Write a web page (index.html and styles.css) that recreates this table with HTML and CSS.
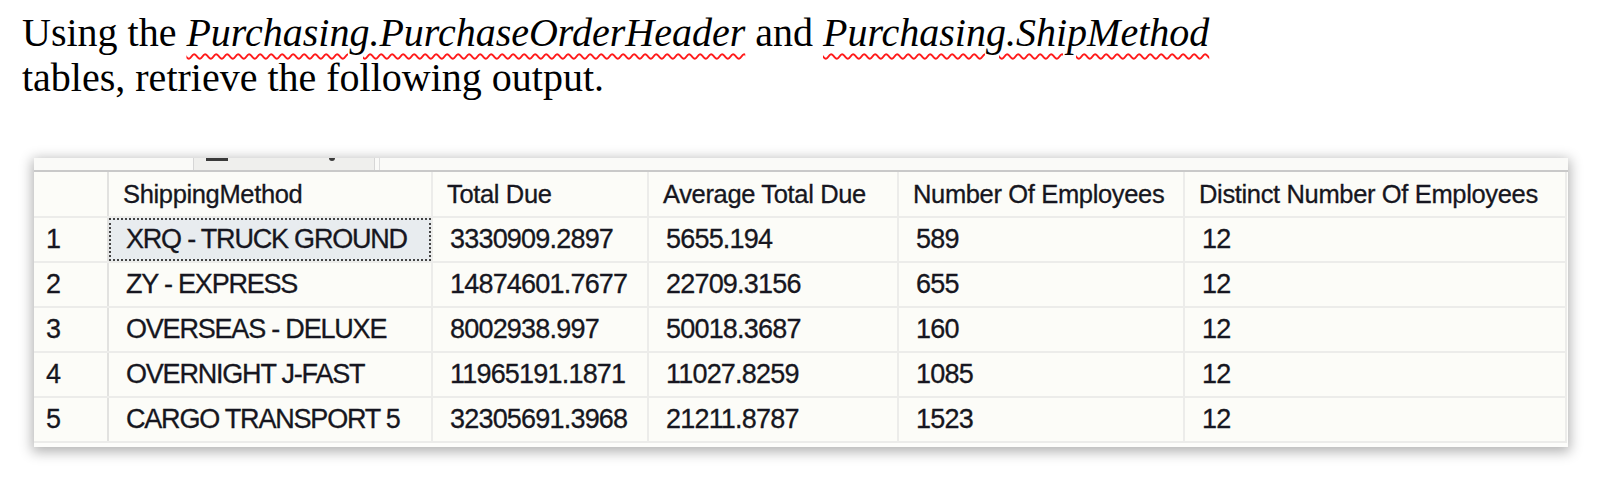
FILE: index.html
```html
<!DOCTYPE html>
<html>
<head>
<meta charset="utf-8">
<link rel="stylesheet" href="styles.css">
</head>
<body>
<p class="intro">Using the <em class="sq">Purchasing.PurchaseOrderHeader</em> and <em class="sq">Purchasing.ShipMethod</em><br>tables, retrieve the following output.</p>
<div class="panel">
  <div class="tabstrip">
    <div class="tab"><span class="mark m1"></span><span class="mark m2"></span></div>
    <div class="tab2"></div>
  </div>
  <table class="grid">
    <colgroup>
      <col class="c0"><col class="c1"><col class="c2"><col class="c3"><col class="c4"><col class="c5">
    </colgroup>
    <thead>
      <tr><th class="rn"></th><th>ShippingMethod</th><th>Total Due</th><th>Average Total Due</th><th>Number Of Employees</th><th>Distinct Number Of Employees</th></tr>
    </thead>
    <tbody>
      <tr><td class="rn">1</td><td class="name sel">XRQ - TRUCK GROUND</td><td>3330909.2897</td><td>5655.194</td><td>589</td><td>12</td></tr>
      <tr><td class="rn">2</td><td class="name">ZY - EXPRESS</td><td>14874601.7677</td><td>22709.3156</td><td>655</td><td>12</td></tr>
      <tr><td class="rn">3</td><td class="name">OVERSEAS - DELUXE</td><td>8002938.997</td><td>50018.3687</td><td>160</td><td>12</td></tr>
      <tr><td class="rn">4</td><td class="name">OVERNIGHT J-FAST</td><td>11965191.1871</td><td>11027.8259</td><td>1085</td><td>12</td></tr>
      <tr><td class="rn">5</td><td class="name">CARGO TRANSPORT 5</td><td>32305691.3968</td><td>21211.8787</td><td>1523</td><td>12</td></tr>
    </tbody>
  </table>
</div>
</body>
</html>
```
FILE: styles.css
```css
html, body {
  margin: 0;
  padding: 0;
  background: #ffffff;
}
body {
  width: 1608px;
  height: 491px;
  overflow: hidden;
}
.intro {
  margin: 0;
  padding: 10px 0 0 22px;
  font-family: "Liberation Serif", "Times New Roman", serif;
  font-size: 40px;
  line-height: 45px;
  color: #000;
}
.sq {
  font-style: italic;
  text-decoration: underline wavy #ff1a1a;
  text-decoration-thickness: 1.5px;
  text-underline-offset: 7px;
}
.panel {
  margin: 58px 0 0 34px;
  width: 1534px;
  padding-bottom: 4px;
  background: #fdfdfb;
  box-shadow: 0 3px 12px 2px rgba(0,0,0,0.3);
}
.tabstrip {
  height: 12px;
  display: flex;
  padding-left: 159px;
  background: #fafaf8;
  border-bottom: 2px solid #c9c9c9;
}
.tab {
  position: relative;
  width: 180px;
  height: 12px;
  background: #efefed;
  border-left: 1px solid #d6d6d6;
  border-right: 1px solid #d6d6d6;
}
.tab2 {
  width: 4px;
  height: 12px;
  border-right: 1px solid #dedede;
}
.mark {
  position: absolute;
  background: #3a3a3a;
}
.m1 { left: 12px; top: 0; width: 22px; height: 3px; }
.m2 { left: 135px; top: 0; width: 6px; height: 3px; border-radius: 0 0 3px 3px; }
.grid {
  border-collapse: collapse;
  table-layout: fixed;
  width: 1532px;
  font-family: "Liberation Sans", Arial, sans-serif;
  color: #161620;
  background: #fcfcf8;
  -webkit-text-stroke: 0.3px #161620;
}
.c0 { width: 74px; }
.c1 { width: 324px; }
.c2 { width: 216px; }
.c3 { width: 250px; }
.c4 { width: 286px; }
.c5 { width: 382px; }
.grid th {
  height: 44px;
  padding: 0 0 0 14px;
  text-align: left;
  font-weight: normal;
  font-size: 25.5px;
  letter-spacing: -0.35px;
  border-right: 2px solid #ececea;
  border-bottom: 2px solid #ececea;
  white-space: nowrap;
}
.grid td {
  height: 43px;
  padding: 0 0 0 17px;
  font-size: 27px;
  letter-spacing: -0.8px;
  border-right: 2px solid #ececea;
  border-bottom: 2px solid #ececea;
  white-space: nowrap;
}
.grid td.name {
  letter-spacing: -1.2px;
}
.grid .rn {
  padding-left: 12px;
  border-right: 2px solid #e2e2e0;
}
.grid td.sel {
  background: #e8ecef;
  outline: 2px dotted #444;
  outline-offset: -3px;
}
```
